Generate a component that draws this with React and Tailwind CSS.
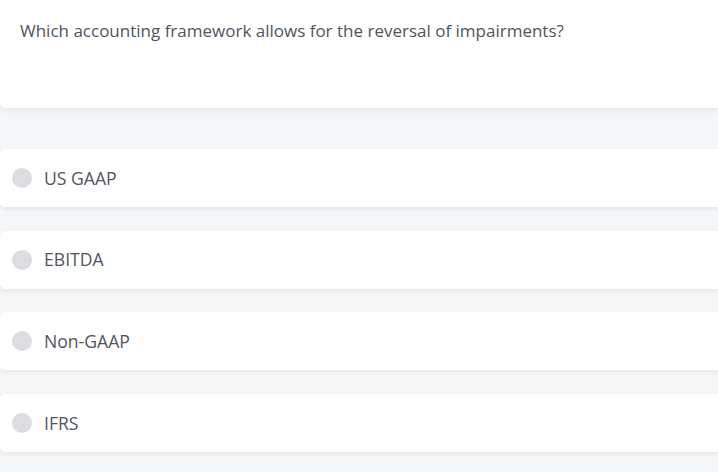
export default function App() {
  const options = ["US GAAP", "EBITDA", "Non-GAAP", "IFRS"];
  return (
    <div
      className="w-[718px] h-[472px] overflow-hidden bg-[#f5f6f8]"
      style={{ fontFamily: '"Open Sans", "Noto Sans", sans-serif' }}
    >
      <div className="h-[108px] bg-white rounded-bl-[5px] shadow-[0_2px_6px_rgba(0,0,0,0.08)] px-5 pt-[18px]">
        <p className="text-[17px] leading-[26px] text-[#50555e]">
          Which accounting framework allows for the reversal of impairments?
        </p>
      </div>
      <div className="flex flex-col gap-[23.6px] pt-[41px]">
        {options.map((o) => (
          <div
            key={o}
            className="h-[58px] bg-white rounded-l-[5px] shadow-[0_2px_5px_rgba(0,0,0,0.07)] flex items-center pl-3 gap-3"
          >
            <span className="w-5 h-5 rounded-full bg-[#dcdde0]" />
            <span className="text-[17.6px] text-[#50555e]">{o}</span>
          </div>
        ))}
      </div>
    </div>
  );
}
